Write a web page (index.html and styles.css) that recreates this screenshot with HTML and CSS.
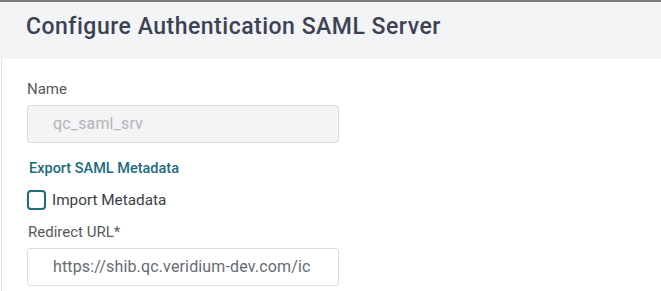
FILE: index.html
```html
<!DOCTYPE html>
<html>
<head>
<meta charset="utf-8">
<link rel="stylesheet" href="styles.css">
</head>
<body>
<div class="topbar"></div>
<header class="header">
  <h1 class="title">Configure Authentication SAML Server</h1>
</header>
<main class="form">
  <label class="label label-name">Name</label>
  <div class="input input-disabled">qc_saml_srv</div>
  <a class="link">Export SAML Metadata</a>
  <div class="check-row">
    <span class="checkbox"></span>
    <span class="check-label">Import Metadata</span>
  </div>
  <label class="label label-url">Redirect URL*</label>
  <div class="input">https://shib.qc.veridium-dev.com/ic</div>
</main>
</body>
</html>
```
FILE: styles.css
```css
* { box-sizing: border-box; }
html, body { margin: 0; padding: 0; background: #ffffff; }
body {
  font-family: Roboto, "Liberation Sans", sans-serif;
  width: 661px;
  height: 291px;
  overflow: hidden;
}
.topbar {
  height: 2px;
  background: #7b7b7b;
}
.header {
  height: 57px;
  background: #f3f4f6;
  display: flex;
  align-items: center;
  padding-left: 26px;
  padding-bottom: 7px;
}
.title {
  margin: 0;
  font-size: 23px;
  font-weight: 500;
  color: #3b4253;
  letter-spacing: 0.5px;
  line-height: 24px;
}
.form {
  margin-left: 1px;
  border-left: 1px solid #e2e2e2;
  padding: 21px 0 0 25px;
  display: flex;
  flex-direction: column;
  align-items: flex-start;
  height: 232px;
}
.label {
  font-size: 15px;
  line-height: 18px;
  color: #555a60;
}
.label-name { margin-bottom: 7px; }
.input {
  width: 312px;
  height: 38px;
  border: 1px solid #dcdcdc;
  border-radius: 3px;
  padding-left: 25px;
  font-size: 16px;
  letter-spacing: 0.15px;
  line-height: 36px;
  color: #666b70;
  white-space: nowrap;
  overflow: hidden;
}
.input-disabled {
  background: #f3f4f6;
  color: #b3b5b8;
}
.link {
  margin-top: 17px;
  margin-left: 2px;
  font-size: 14.5px;
  font-weight: 500;
  line-height: 18px;
  color: #1d6b7c;
}
.check-row {
  margin-top: 12px;
  display: flex;
  align-items: center;
  gap: 6px;
}
.checkbox {
  width: 19px;
  height: 20px;
  border: 2px solid #1f6d7e;
  border-radius: 4px;
}
.check-label {
  font-size: 15.3px;
  color: #3a3f45;
}
.label-url {
  margin-top: 13px;
  margin-left: 1px;
  margin-bottom: 7px;
}
```
